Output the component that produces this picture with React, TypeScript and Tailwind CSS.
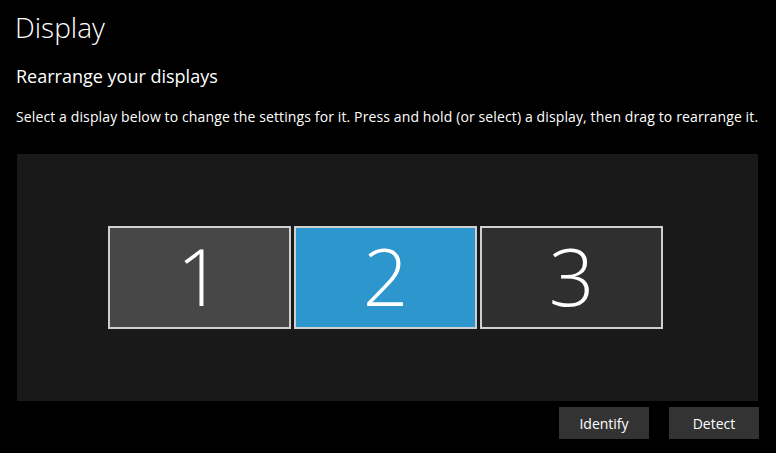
const displays = [
  { id: 1, bg: "bg-[#474747]" },
  { id: 2, bg: "bg-[#2d97cd]" },
  { id: 3, bg: "bg-[#2f2f2f]" },
];

const App = () => {
  return (
    <div className="h-[453px] w-[776px] overflow-hidden bg-black font-['Open_Sans',sans-serif] text-white">
      <h1 className="pl-[15px] pt-[8px] text-[28px] font-light leading-[38px]">
        Display
      </h1>
      <h2 className="pl-[16px] pt-[18px] text-[18px] leading-[24px]">
        Rearrange your displays
      </h2>
      <p className="pl-[16px] pt-[19px] text-[14px] leading-[20px] tracking-[0.12px]">
        Select a display below to change the settings for it. Press and hold
        (or select) a display, then drag to rearrange it.
      </p>
      <div className="ml-[17px] mt-[27px] flex h-[247px] w-[741px] items-center justify-center bg-[#191919]">
        <div className="flex gap-[3px] pr-[4px]">
          {displays.map((d) => (
            <div
              key={d.id}
              className={`flex h-[103px] w-[183px] items-center justify-center border-2 border-[#cfcfcf] ${d.bg}`}
            >
              <span className="-mt-[6px] text-[80px] font-light leading-none">
                {d.id}
              </span>
            </div>
          ))}
        </div>
      </div>
      <div className="mt-[6px] flex w-[759px] justify-end gap-[20px]">
        <button className="h-[32px] w-[90px] bg-[#333333] text-[14px]">
          Identify
        </button>
        <button className="h-[32px] w-[90px] bg-[#333333] text-[14px]">
          Detect
        </button>
      </div>
    </div>
  );
};

export default App;
